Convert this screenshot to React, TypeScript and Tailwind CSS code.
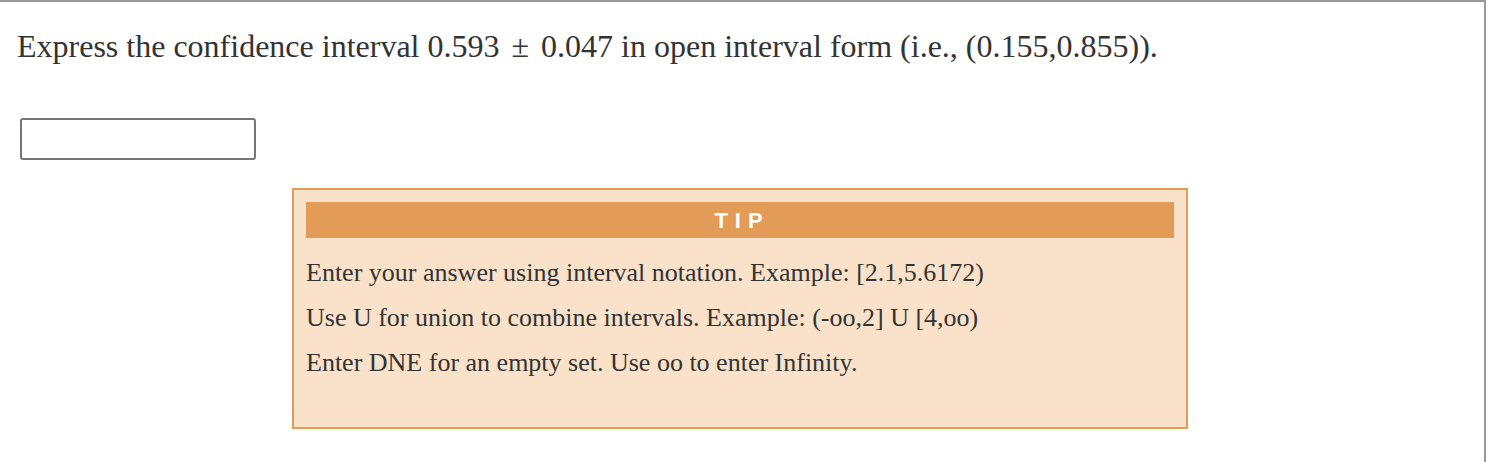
export default function App() {
  const tips = [
    "Enter your answer using interval notation. Example: [2.1,5.6172)",
    "Use U for union to combine intervals. Example: (-oo,2] U [4,oo)",
    "Enter DNE for an empty set. Use oo to enter Infinity.",
  ];

  return (
    <div className="h-[462px] w-[1486px] border-t-2 border-r-2 border-[#999999] bg-white font-['Liberation_Serif',serif] text-[#333333]">
      <div className="pl-[17px] pt-[24px] text-[32px] leading-[40px]">
        Express the confidence interval 0.593 <span className="mx-[4px]">±</span> 0.047 in open interval form (i.e., (0.155,0.855)).
      </div>

      <div className="pl-[20px] pt-[52px]">
        <input
          type="text"
          className="h-[42px] w-[236px] rounded-[3px] border-2 border-[#767676] bg-white"
        />
      </div>

      <div className="pl-[292px] pt-[28px]">
        <div className="h-[241px] w-[896px] border-2 border-[#e39c58] bg-[#f9e2c9] p-[12px]">
          <div className="flex h-[36px] items-center justify-center bg-[#e29c58] pl-[4px] font-['Liberation_Sans',sans-serif] text-[22px] font-bold tracking-[7px] text-white">
            TIP
          </div>
          <div className="pt-[20px] text-[26px] leading-[30px]">
            {tips.map((t) => (
              <p key={t} className="mb-[15px]">
                {t}
              </p>
            ))}
          </div>
        </div>
      </div>
    </div>
  );
}
